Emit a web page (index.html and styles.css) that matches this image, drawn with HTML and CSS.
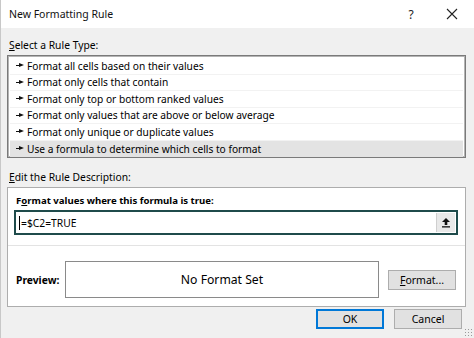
FILE: index.html
```html
<!DOCTYPE html>
<html lang="en">
<head>
    <meta charset="UTF-8">
    <title>New Formatting Rule</title>
    <link rel="stylesheet" href="styles.css">
</head>
<body>
    <div class="dialog">
        <div class="titlebar">
            <span class="title">New Formatting Rule</span>
            <span class="help">?</span>
            <span class="close">
                <svg width="12" height="12" viewBox="0 0 12 12"><path d="M1 1 L11 11 M11 1 L1 11" stroke="#222" stroke-width="1.1"/></svg>
            </span>
        </div>
        <div class="content">
            <div class="label"><u>S</u>elect a Rule Type:</div>
            <div class="rule-list">
                <div class="rule"><span class="arrow"></span>Format all cells based on their values</div>
                <div class="rule"><span class="arrow"></span>Format only cells that contain</div>
                <div class="rule"><span class="arrow"></span>Format only top or bottom ranked values</div>
                <div class="rule"><span class="arrow"></span>Format only values that are above or below average</div>
                <div class="rule"><span class="arrow"></span>Format only unique or duplicate values</div>
                <div class="rule selected"><span class="arrow"></span>Use a formula to determine which cells to format</div>
            </div>
            <div class="label desc-label"><u>E</u>dit the Rule Description:</div>
            <div class="panel">
                <div class="formula-label">F<u>o</u>rmat values where this formula is true:</div>
                <div class="formula-box">
                    <span class="caret"></span><span class="formula-text">=$C2=TRUE</span>
                    <span class="collapse-btn">
                        <svg width="10" height="11" viewBox="0 0 10 11"><path d="M5 1 L9 5 L6.3 5 L6.3 8 L3.7 8 L3.7 5 L1 5 Z" fill="#111"/><rect x="1" y="9.2" width="8" height="1.3" fill="#111"/></svg>
                    </span>
                </div>
                <div class="separator"></div>
                <div class="preview-row">
                    <span class="preview-label">Preview:</span>
                    <div class="preview-box">No Format Set</div>
                    <button class="btn format-btn"><u>F</u>ormat...</button>
                </div>
            </div>
            <div class="footer">
                <button class="btn ok-btn">OK</button>
                <button class="btn">Cancel</button>
            </div>
        </div>
        <div class="grip"></div>
    </div>
</body>
</html>
```
FILE: styles.css
```css
*{
    margin: 0;
    padding: 0;
    box-sizing: border-box;
}
body{
    font-family: "Noto Sans", "Open Sans", sans-serif;
    font-size: 10.2px;
    color: #000;
    background: #f0f0f0;
}
.dialog{
    position: relative;
    width: 474px;
    height: 338px;
    background: #f0f0f0;
    border-left: 1px solid #c8c8c8;
}
.titlebar{
    height: 28px;
    background: #fff;
    display: flex;
    align-items: center;
    padding-left: 8px;
}
.titlebar .title{
    flex: 1;
    font-size: 10.5px;
    color: #111;
}
.titlebar .help{
    width: 20px;
    margin-right: 25px;
    font-size: 12px;
    color: #222;
    text-align: center;
}
.titlebar .close{
    width: 12px;
    margin-right: 16px;
    display: flex;
}
.content{
    padding: 8px 8px 0 6px;
}
.label{
    height: 19px;
    line-height: 19px;
    padding-left: 2px;
    font-size: 10.3px;
}
.rule-list{
    height: 103px;
    background: #fff;
    border: 1px solid #7a7a7a;
    box-shadow: inset 0 0 0 1px #b4b4b4;
    padding: 2px;
}
.rule{
    height: 16.5px;
    line-height: 16px;
    padding-left: 6px;
    display: flex;
    align-items: center;
    border-bottom: 1px solid #f2f2f2;
    white-space: nowrap;
}
.rule.selected{
    background: #e3e3e3;
    border-bottom: none;
}
.arrow{
    position: relative;
    width: 8px;
    height: 5px;
    margin-right: 3px;
}
.arrow::before{
    content: "";
    position: absolute;
    left: 0;
    top: 2px;
    width: 4px;
    height: 1px;
    background: #111;
}
.arrow::after{
    content: "";
    position: absolute;
    left: 3px;
    top: 0;
    border-left: 5px solid #111;
    border-top: 2.5px solid transparent;
    border-bottom: 2.5px solid transparent;
}
.desc-label{
    margin-top: 10px;
}
.panel{
    height: 120px;
    background: #fff;
    border: 1px solid #adadad;
    padding: 4px 7px 0 6px;
}
.formula-label{
    font-weight: bold;
    font-size: 9.6px;
    height: 18px;
    line-height: 18px;
    padding-left: 2px;
}
.formula-box{
    height: 25px;
    border: 2px solid #1f4b4b;
    display: flex;
    align-items: center;
    padding-left: 3px;
}
.caret{
    width: 1px;
    height: 14px;
    background: #000;
}
.formula-text{
    flex: 1;
    padding-left: 1px;
    font-size: 10.3px;
}
.collapse-btn{
    width: 19px;
    height: 19px;
    margin-right: 1px;
    background: #e9e9e9;
    border-left: 1px solid #cfcfcf;
    display: flex;
    align-items: center;
    justify-content: center;
}
.separator{
    height: 1px;
    margin: 10px -7px 0 -6px;
    background: #e3e3e3;
}
.preview-row{
    display: flex;
    align-items: center;
    margin-top: 15px;
}
.preview-label{
    font-weight: bold;
    font-size: 10.3px;
    width: 51px;
    padding-left: 2px;
}
.preview-box{
    width: 314px;
    height: 37px;
    border: 1px solid #8a8a8a;
    display: flex;
    align-items: center;
    justify-content: center;
    font-size: 12.2px;
}
.btn{
    font-family: "Noto Sans", "Open Sans", sans-serif;
    font-size: 10.5px;
    height: 20px;
    width: 68px;
    background: #e1e1e1;
    border: 1px solid #adadad;
    color: #000;
}
.format-btn{
    margin-left: 9px;
}
.footer{
    display: flex;
    justify-content: flex-end;
    gap: 10px;
    padding-right: 4px;
    margin-top: 2px;
}
.ok-btn{
    border: 2px solid #0078d7;
}
.grip{
    position: absolute;
    right: 2px;
    bottom: 2px;
    width: 8px;
    height: 8px;
    background-image: radial-gradient(circle, #9a9a9a 0.7px, transparent 0.8px);
    background-size: 3px 3px;
}
```
